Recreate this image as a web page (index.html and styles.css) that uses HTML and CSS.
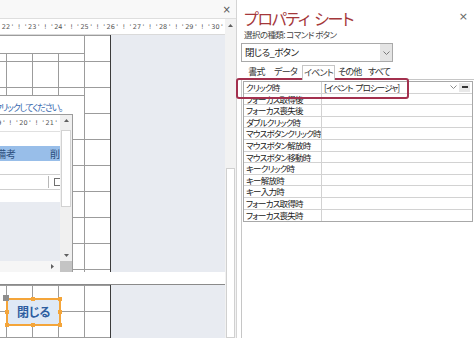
FILE: index.html
```html
<!DOCTYPE html>
<html lang="ja">
<head>
<meta charset="utf-8">
<title>プロパティ シート</title>
<link rel="stylesheet" href="styles.css">
</head>
<body>
<div class="app">
  <section class="designer">
    <div class="doc-bar"><span class="doc-close">×</span></div>
    <div class="view">
      <div class="canvas-col">
        <div class="ruler">
          <div class="cm"><span class="n">22</span><span>'</span><span>!</span><span>'</span></div>
          <div class="cm"><span class="n">23</span><span>'</span><span>!</span><span>'</span></div>
          <div class="cm"><span class="n">24</span><span>'</span><span>!</span><span>'</span></div>
          <div class="cm"><span class="n">25</span><span>'</span><span>!</span><span>'</span></div>
          <div class="cm"><span class="n">26</span><span>'</span><span>!</span><span>'</span></div>
          <div class="cm"><span class="n">27</span><span>'</span><span>!</span><span>'</span></div>
          <div class="cm"><span class="n">28</span><span>'</span><span>!</span><span>'</span></div>
          <div class="cm"><span class="n">29</span><span>'</span><span>!</span><span>'</span></div>
          <div class="cm last"><span class="n">30</span><span>'</span></div>
        </div>
        <div class="section detail">
          <div class="form-grid">
            <div class="top-box"></div>
            <div class="label-box"><span class="label-text">クリックしてください。</span></div>
            <div class="subform">
              <div class="sf-body">
                <div class="sf-ruler">
                  <div class="cm"><span class="n">19</span><span>'</span><span>!</span><span>'</span></div>
                  <div class="cm"><span class="n">20</span><span>'</span><span>!</span><span>'</span></div>
                  <div class="cm"><span class="n">21</span><span>'</span><span>!</span><span>'</span></div>
                </div>
                <div class="sf-gap1"></div>
                <div class="sf-head"><span class="sf-h1">備考</span><span class="sf-h2">削除</span></div>
                <div class="sf-gap2"></div>
                <div class="sf-row"><span class="sf-field"></span><span class="sf-check"></span></div>
                <div class="sf-gap3"></div>
                <div class="sf-empty"></div>
              </div>
              <div class="sf-vscroll">
                <span class="arr"><svg width="5" height="3" viewBox="0 0 5 3"><polygon points="0,3 5,3 2.5,0" fill="#606060"/></svg></span>
                <span class="sf-thumb"></span>
                <span class="sf-space"></span>
                <span class="arr"><svg width="5" height="3" viewBox="0 0 5 3"><polygon points="0,0 5,0 2.5,3" fill="#606060"/></svg></span>
              </div>
              <div class="sf-hscroll"><svg width="3" height="5" viewBox="0 0 3 5"><polygon points="0,0 3,2.5 0,5" fill="#606060"/></svg></div>
              <div class="sf-corner"></div>
            </div>
          </div>
          <div class="backdrop"></div>
        </div>
        <div class="section-bar"></div>
        <div class="section footer">
          <div class="form-grid">
            <button class="close-btn" type="button">閉じる</button>
            <span class="handle move"></span>
            <span class="handle h-tm"></span>
            <span class="handle h-tr"></span>
            <span class="handle h-ml"></span>
            <span class="handle h-mr"></span>
            <span class="handle h-bl"></span>
            <span class="handle h-bm"></span>
            <span class="handle h-br"></span>
          </div>
          <div class="backdrop"></div>
        </div>
      </div>
      <div class="vscroll">
        <span class="vs-up"><svg width="5" height="3" viewBox="0 0 5 3"><polygon points="0,3 5,3 2.5,0" fill="#606060"/></svg></span>
        <span class="vs-track"></span>
        <span class="vs-thumb"></span>
      </div>
    </div>
  </section>

  <aside class="props">
    <div class="props-head">
      <h1 class="props-title">プロパティ シート</h1>
      <span class="props-close">×</span>
    </div>
    <div class="props-sub">選択の種類: コマンド ボタン</div>
    <div class="combo">
      <span class="combo-text">閉じる_ボタン</span>
      <span class="combo-btn"><svg width="7" height="4" viewBox="0 0 7 4"><polyline points="0.5,0.5 3.5,3.5 6.5,0.5" fill="none" stroke="#7a7a7a" stroke-width="1"/></svg></span>
    </div>
    <div class="tabs">
      <span class="tab t1">書式</span>
      <span class="tab t2">データ</span>
      <span class="tab t3 sel">イベント</span>
      <span class="tab t4">その他</span>
      <span class="tab t5">すべて</span>
    </div>
    <div class="tab-panel">
      <div class="grid">
        <div class="cell lab">クリック時</div>
        <div class="cell val first"><span class="v-text">[イベント プロシージャ]</span><span class="v-drop"><svg width="7" height="4" viewBox="0 0 7 4"><polyline points="0.5,0.5 3.5,3.5 6.5,0.5" fill="none" stroke="#8a8a8a" stroke-width="1"/></svg></span><span class="v-build"><span class="dash"></span></span></div>
        <div class="cell lab">フォーカス取得後</div><div class="cell val"></div>
        <div class="cell lab">フォーカス喪失後</div><div class="cell val"></div>
        <div class="cell lab">ダブルクリック時</div><div class="cell val"></div>
        <div class="cell lab">マウスボタンクリック時</div><div class="cell val"></div>
        <div class="cell lab">マウスボタン解放時</div><div class="cell val"></div>
        <div class="cell lab">マウスボタン移動時</div><div class="cell val"></div>
        <div class="cell lab">キークリック時</div><div class="cell val"></div>
        <div class="cell lab">キー解放時</div><div class="cell val"></div>
        <div class="cell lab">キー入力時</div><div class="cell val"></div>
        <div class="cell lab">フォーカス取得時</div><div class="cell val"></div>
        <div class="cell lab">フォーカス喪失時</div><div class="cell val"></div>
      </div>
    </div>
    <div class="highlight"></div>
  </aside>
</div>
</body>
</html>
```
FILE: styles.css
```css
* { box-sizing: border-box; margin: 0; padding: 0; }
html, body { width: 474px; height: 338px; overflow: hidden; background: #fff; }
body {
  font-family: "Noto Sans CJK JP", "Noto Sans", sans-serif;
  font-feature-settings: "palt";
  color: #222;
  white-space: nowrap;
}
.app { display: flex; width: 474px; height: 338px; }

/* ---------- designer ---------- */
.designer { width: 236px; flex: none; display: flex; flex-direction: column; background: #fff; }
.doc-bar {
  height: 19px; flex: none; background: #f8f8f8; border-bottom: 1px solid #dedede;
  display: flex; justify-content: flex-end; align-items: center; padding: 2px 5px 0 0;
}
.doc-close { font-family: "DejaVu Sans", sans-serif; font-size: 10px; line-height: 10px; color: #555; }
.view { flex: 1; display: flex; min-height: 0; }
.canvas-col { width: 225px; flex: none; display: flex; flex-direction: column; }

.ruler {
  height: 16px; flex: none; border-bottom: 1px solid #dadada; background: #fff;
  display: flex; align-items: center; padding-left: 2.7px; overflow: hidden;
  font-family: "DejaVu Sans", sans-serif; font-size: 6.5px; color: #555;
}
.cm { display: flex; flex: none; width: 26.2px; }
.cm.last { width: 13.1px; }
.cm span { width: 6.55px; flex: none; display: flex; justify-content: center; }

.section { display: flex; }
.detail { height: 237px; flex: none; }
.footer { flex: 1; }
.form-grid {
  position: relative; width: 111px; flex: none;
  border-right: 1px solid #3c3c3c;
  background-color: #fff;
  background-image: linear-gradient(to right, #9c9c9c 1px, transparent 1px),
                    linear-gradient(to bottom, #9c9c9c 1px, transparent 1px);
  background-size: 26px 26px, 26px 26px;
  background-position: 6px 0, 0 0;
}
.backdrop { flex: 1; background: #e8ebf1; }
.section-bar { height: 13px; flex: none; background: #fff; border-bottom: 1px solid #8a8a8a; }

.top-box {
  position: absolute; left: 0; top: 1px; width: 84px; height: 18px;
  background: #fff; border-bottom: 1px solid #9c9c9c;
}
.label-box {
  position: absolute; left: 0; top: 60px; width: 84px; height: 19px;
  background: #fff; border-top: 1px solid #9c9c9c; overflow: hidden;
  display: flex; align-items: flex-end;
}
.label-text { font-size: 9px; line-height: 12px; color: #3b6cb0; margin-left: -6px; letter-spacing: -1.3px; }

/* subform */
.subform {
  position: absolute; left: 0; top: 79px; width: 73px; height: 158px;
  border-top: 1px solid #9c9c9c; border-right: 1px solid #9c9c9c;
  display: grid; grid-template-columns: 60px 12px; grid-template-rows: 1fr 11px;
  background: #fff;
}
.sf-body { display: flex; flex-direction: column; overflow: hidden; background: #fff; }
.sf-ruler {
  height: 17px; flex: none; border-bottom: 1px solid #e0e0e0; display: flex; align-items: center;
  margin-left: -6px;
  font-family: "DejaVu Sans", sans-serif; font-size: 6.5px; color: #555;
}
.sf-gap1 { height: 14px; flex: none; }
.sf-head {
  height: 15px; flex: none; background: #98bee9; position: relative;
  font-size: 10px; line-height: 15px; color: #2c4f7c;
}
.sf-h1 { position: absolute; left: -4px; top: 0; }
.sf-h2 { position: absolute; left: 50px; top: 0; }
.sf-gap2 { height: 13px; flex: none; }
.sf-row {
  height: 16px; flex: none; border-top: 1px solid #cfcfcf; border-bottom: 1px solid #cfcfcf;
  display: flex; align-items: center;
}
.sf-field { width: 49px; height: 12px; border-right: 1px solid #b8b8b8; flex: none; }
.sf-check { width: 7px; height: 8px; margin-left: 5px; border: 1px solid #707070; flex: none; }
.sf-gap3 { height: 12px; flex: none; }
.sf-empty { flex: 1; background: #e8ebf1; }
.sf-vscroll { background: #f0f0f0; display: flex; flex-direction: column; align-items: center; }
.arr { height: 11px; flex: none; display: flex; align-items: center; justify-content: center; }
.sf-thumb { width: 10px; height: 77px; flex: none; background: #fff; border: 1px solid #d2d2d2; margin-top: 4px; }
.sf-space { flex: 1; }
.sf-hscroll { background: #f6f6f6; display: flex; justify-content: flex-end; align-items: center; padding-right: 6px; }
.sf-corner { background: #c4c4c4; }

/* button on footer */
.close-btn {
  position: absolute; left: 6px; top: 13px; width: 55px; height: 28px;
  border: 2px solid #f4a53a; background: #dfe9f6; color: #2d5da0;
  font-family: "Noto Sans CJK JP", sans-serif; font-feature-settings: "palt";
  font-weight: 700; font-size: 12px; line-height: 24px; text-align: center; letter-spacing: -0.3px;
}
.handle { position: absolute; width: 4px; height: 4px; background: #f4a53a; }
.handle.move { left: 3px; top: 10px; width: 6px; height: 6px; background: #8e8e8e; }
.h-tm { left: 31px; top: 12px; }
.h-tr { left: 58px; top: 12px; }
.h-ml { left: 5px; top: 25px; }
.h-mr { left: 58px; top: 25px; }
.h-bl { left: 5px; top: 38px; }
.h-bm { left: 31px; top: 38px; }
.h-br { left: 58px; top: 38px; }

/* designer vertical scrollbar */
.vscroll { width: 11px; flex: none; background: #f2f2f2; display: flex; flex-direction: column; align-items: center; }
.vs-up { height: 13px; flex: none; display: flex; align-items: center; justify-content: center; }
.vs-track { height: 136px; flex: none; }
.vs-thumb { flex: 1; width: 9px; background: #fff; border: 1px solid #d0d0d0; }

/* ---------- property sheet ---------- */
.props { flex: 1; position: relative; border-left: 1px solid #d4d4d4; padding-left: 4px; background: #fff; }
.props-head { height: 29px; display: flex; justify-content: space-between; align-items: flex-start; padding-top: 9px; }
.props-title { font-size: 16px; line-height: 18px; font-weight: 400; color: #a4373a; margin-left: 3px; letter-spacing: -1.3px; word-spacing: 3px; }
.props-close { font-family: "DejaVu Sans", sans-serif; font-size: 11px; line-height: 11px; color: #666; margin: 2px 6px 0 0; }
.props-sub { font-size: 8.5px; line-height: 11px; color: #444; margin-left: 3px; letter-spacing: -0.6px; }
.combo { margin-top: 3px; width: 152px; height: 19px; border: 1px solid #a9a9a9; display: flex; }
.combo-text { flex: 1; font-size: 9.5px; line-height: 17px; padding-left: 3px; color: #222; letter-spacing: -0.6px; }
.combo-btn { width: 12px; background: #e4e4e4; display: flex; align-items: center; justify-content: center; }

.tabs { display: flex; margin-top: 3px; height: 15px; padding-left: 2px; position: relative; z-index: 1; }
.tab { flex: none; font-size: 9px; line-height: 14px; text-align: center; color: #333; height: 15px; letter-spacing: -0.8px; overflow: visible; }
.t1 { width: 27px; }
.t2 { width: 31px; margin-right: 1px; }
.t3 { width: 33px; }
.t4 { width: 22px; margin-left: 3px; }
.t5 { width: 38px; }
.tab.sel { background: #fff; border: 1px solid #c6c6c6; border-bottom: none; }
.tab-panel { margin-top: -1px; border-top: 1px solid #c6c6c6; border-left: 1px solid #c6c6c6; padding: 1px 0 0 1px; height: 260px; }

.grid { width: 230px; border: 1px solid #a8a8a8; display: grid; grid-template-columns: 78px 1fr; }
.cell {
  height: 11.6px; font-size: 8.5px; line-height: 10.4px; overflow: hidden;
  border-bottom: 1px solid #d2d2d2; color: #222; letter-spacing: -0.8px;
}
.grid .cell:nth-last-child(-n+2) { border-bottom: none; }
.lab { padding-left: 2px; border-right: 1px solid #d2d2d2; }
.val.first { display: flex; align-items: center; padding-left: 2px; }
.v-text { flex: 1; letter-spacing: -0.9px; word-spacing: 2px; }
.v-drop { width: 9px; height: 10px; display: flex; align-items: center; justify-content: center; }
.v-build { width: 11px; height: 9px; margin: 0 2px 0 1px; background: #e8e8e8; display: flex; align-items: center; justify-content: center; }
.dash { width: 6px; height: 2px; background: #333; }

.highlight {
  position: absolute; left: -1px; top: 78px; width: 173px; height: 21px;
  border: 2px solid #a3304e; border-radius: 3px; pointer-events: none;
}
```
